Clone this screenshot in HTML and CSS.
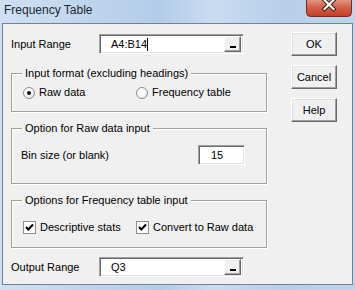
FILE: index.html
```html
<!DOCTYPE html>
<html lang="en">
<head>
    <meta charset="UTF-8">
    <title>Frequency Table</title>
    <link rel="stylesheet" href="styles.css">
</head>
<body>

<div class="window">
    <div class="titlebar">
        <span class="title">Frequency Table</span>
        <span class="close-btn">
            <svg width="46" height="17" viewBox="0 0 46 17">
                <defs>
                    <linearGradient id="red" x1="0" y1="0" x2="0" y2="1">
                        <stop offset="0" stop-color="#e8a493"/>
                        <stop offset="0.45" stop-color="#d4664f"/>
                        <stop offset="1" stop-color="#c43c22"/>
                    </linearGradient>
                </defs>
                <path d="M0.5 -2 V12.5 Q0.5 16.5 4.5 16.5 H41.5 Q45.5 16.5 45.5 12.5 V-2 Z" fill="url(#red)" stroke="#7c2b1c"/>
                <path d="M18.5 0 L27.5 9 M27.5 0 L18.5 9" stroke="#4a1b12" stroke-width="4.2" stroke-linecap="square"/>
                <path d="M18.5 0 L27.5 9 M27.5 0 L18.5 9" stroke="#ffffff" stroke-width="2.2" stroke-linecap="square"/>
            </svg>
        </span>
    </div>

    <div class="client">
        <div class="form">
            <div class="field-row">
                <span class="field-label">Input Range</span>
                <div class="ref-box sunken">
                    <span class="ref-text">A4:B14<span class="caret"></span></span>
                    <span class="ref-btn"><span class="ref-bar"></span></span>
                </div>
            </div>

            <div class="group group-format">
                <div class="group-title">Input format (excluding headings)</div>
                <div class="choice-row">
                    <div class="choice choice-first">
                        <span class="radio checked"></span>
                        <span>Raw data</span>
                    </div>
                    <div class="choice">
                        <span class="radio"></span>
                        <span>Frequency table</span>
                    </div>
                </div>
            </div>

            <div class="group group-raw">
                <div class="group-title">Option for Raw data input</div>
                <div class="bin-row">
                    <span>Bin size (or blank)</span>
                    <div class="bin-box sunken">15</div>
                </div>
            </div>

            <div class="group group-freq">
                <div class="group-title">Options for Frequency table input</div>
                <div class="choice-row check-row">
                    <div class="choice choice-first">
                        <span class="checkbox">
                            <svg width="11" height="11" viewBox="0 0 11 11"><path d="M2 5 L4.3 7.5 L9 2.5" fill="none" stroke="#000" stroke-width="2"/></svg>
                        </span>
                        <span>Descriptive stats</span>
                    </div>
                    <div class="choice">
                        <span class="checkbox">
                            <svg width="11" height="11" viewBox="0 0 11 11"><path d="M2 5 L4.3 7.5 L9 2.5" fill="none" stroke="#000" stroke-width="2"/></svg>
                        </span>
                        <span>Convert to Raw data</span>
                    </div>
                </div>
            </div>

            <div class="field-row output-row">
                <span class="field-label">Output Range</span>
                <div class="ref-box sunken">
                    <span class="ref-text">Q3</span>
                    <span class="ref-btn"><span class="ref-bar"></span></span>
                </div>
            </div>
        </div>

        <div class="buttons">
            <button class="btn">OK</button>
            <button class="btn">Cancel</button>
            <button class="btn">Help</button>
        </div>
    </div>
</div>

</body>
</html>
```

FILE: styles.css
```css
html, body {
    margin: 0;
    padding: 0;
}
body {
    font-family: "Liberation Sans", Arial, sans-serif;
    font-size: 11px;
    line-height: 13px;
    color: #000;
    background: #b9d1ea;
}
.window {
    width: 355px;
    height: 290px;
    box-sizing: border-box;
    display: flex;
    flex-direction: column;
    padding: 0 2px 5px 2px;
    background: linear-gradient(90deg, #cfe0f2 0%, #c2d7ee 20%, #b3cce8 45%, #c9dcf1 60%, #b7cfea 80%, #bdd4ec 100%);
}
.titlebar {
    height: 23px;
    display: flex;
    justify-content: space-between;
    align-items: flex-start;
    margin: 0 -2px;
}
.title {
    padding-left: 4px;
    font-size: 12px;
    line-height: 20px;
    color: #1c2733;
}
.close-btn {
    margin-right: 3px;
    height: 17px;
}

/* client area */
.client {
    flex: 1;
    display: flex;
    background: #f0f0f0;
    border: 1px solid #6f8296;
}
.form {
    width: 256px;
    padding: 10px 0 0 8px;
}
.field-row {
    display: flex;
    align-items: center;
    height: 20px;
}
.field-label {
    width: 88px;
}
.sunken {
    box-sizing: border-box;
    background: #fff;
    border-style: solid;
    border-width: 1px;
    border-color: #a0a0a0 #ffffff #ffffff #a0a0a0;
    box-shadow: inset 1px 1px 0 #696969, inset -1px -1px 0 #e3e3e3;
}
.ref-box {
    width: 145px;
    height: 20px;
    display: flex;
    align-items: center;
    justify-content: space-between;
    padding: 0 2px 0 11px;
}
.ref-text {
    display: flex;
    align-items: center;
}
.caret {
    display: inline-block;
    width: 1px;
    height: 13px;
    background: #000;
}
.ref-btn {
    box-sizing: border-box;
    width: 17px;
    height: 16px;
    background: #f0f0f0;
    border-style: solid;
    border-width: 1px;
    border-color: #ffffff #696969 #696969 #ffffff;
    box-shadow: inset -1px -1px 0 #a0a0a0;
    display: flex;
    justify-content: center;
    align-items: flex-end;
    padding-bottom: 3px;
}
.ref-bar {
    width: 6px;
    height: 2px;
    background: #000;
}

/* group boxes */
.group {
    box-sizing: border-box;
    border: 1px solid #a0a0a0;
    box-shadow: inset 1px 1px 0 #fff, 1px 1px 0 #fff;
}
.group-title {
    width: fit-content;
    margin: -7px 0 0 10px;
    padding: 0 3px;
    background: #f0f0f0;
}
.group-format {
    margin-top: 19px;
    height: 39px;
}
.group-raw {
    margin-top: 16px;
    height: 56px;
}
.group-freq {
    margin-top: 16px;
    height: 48px;
}
.choice-row {
    display: flex;
    margin-top: 6px;
    padding-left: 11px;
}
.check-row {
    margin-top: 14px;
}
.choice {
    display: flex;
    align-items: center;
    gap: 4px;
}
.choice-first {
    width: 113px;
}
.radio {
    box-sizing: border-box;
    width: 12px;
    height: 12px;
    border-radius: 50%;
    border: 1px solid #8e8f8f;
    background: radial-gradient(circle at 40% 40%, #ffffff 30%, #dcdcdc 100%);
    display: flex;
    align-items: center;
    justify-content: center;
}
.radio.checked::after {
    content: "";
    width: 4px;
    height: 4px;
    border-radius: 50%;
    background: #111;
}
.checkbox {
    box-sizing: border-box;
    width: 13px;
    height: 13px;
    border: 1px solid #8e8f8f;
    background: #fff;
    display: flex;
    align-items: center;
    justify-content: center;
}
.bin-row {
    display: flex;
    align-items: center;
    justify-content: space-between;
    margin-top: 10px;
    padding: 0 21px 0 9px;
}
.bin-box {
    width: 47px;
    height: 20px;
    padding-left: 12px;
    display: flex;
    align-items: center;
}
.output-row {
    margin-top: 9px;
}

/* buttons */
.buttons {
    display: flex;
    flex-direction: column;
    gap: 9px;
    margin-left: 24px;
    padding-top: 8px;
}
.btn {
    box-sizing: border-box;
    width: 46px;
    height: 24px;
    padding: 0;
    font-family: "Liberation Sans", Arial, sans-serif;
    font-size: 11px;
    color: #000;
    background: #f0f0f0;
    border-style: solid;
    border-width: 1px;
    border-color: #ffffff #696969 #696969 #ffffff;
    box-shadow: inset -1px -1px 0 #a0a0a0, inset 1px 1px 0 #e3e3e3;
}
```
